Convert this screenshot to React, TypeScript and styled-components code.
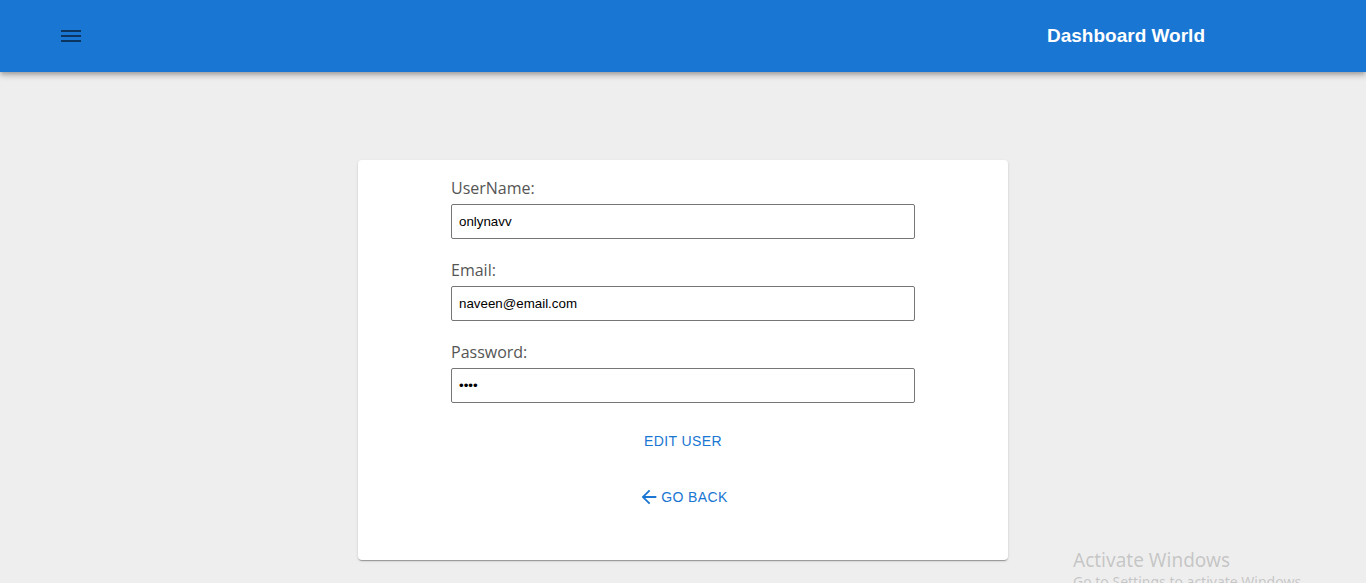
import styled, { createGlobalStyle } from "styled-components";

const GlobalStyle = createGlobalStyle`
  body {
    margin: 0;
    background-color: #eeeeee;
    font-family: "Liberation Sans", Arial, sans-serif;
    overflow: hidden;
  }
`;

const Page = styled.div`
  min-height: 583px;
  position: relative;
`;

const Header = styled.header`
  height: 72px;
  background-color: #1976d2;
  box-shadow: 0 2px 4px -1px rgba(0, 0, 0, 0.2), 0 4px 5px 0 rgba(0, 0, 0, 0.14),
    0 1px 10px 0 rgba(0, 0, 0, 0.12);
  display: flex;
  align-items: center;
  padding: 0 161px 0 58px;
`;

const MenuButton = styled.button`
  border: none;
  background: transparent;
  padding: 0;
  width: 26px;
  height: 24px;
  display: flex;
  color: rgba(0, 0, 0, 0.55);
  cursor: pointer;
`;

const Title = styled.h1`
  margin: 0 0 0 auto;
  color: white;
  font-size: 19px;
  font-weight: 700;
  font-family: "Liberation Sans", Arial, sans-serif;
`;

const Main = styled.main`
  display: flex;
  justify-content: center;
  padding-top: 88px;
`;

const Card = styled.div`
  width: 650px;
  background: white;
  border-radius: 4px;
  box-shadow: 0 2px 1px -1px rgba(0, 0, 0, 0.2), 0 1px 1px 0 rgba(0, 0, 0, 0.14),
    0 1px 3px 0 rgba(0, 0, 0, 0.12);
  padding: 16px 0 45px;
  display: flex;
  flex-direction: column;
  align-items: center;
`;

const Field = styled.div`
  width: 464px;
  display: flex;
  flex-direction: column;
  margin-bottom: 19px;
`;

const Label = styled.label`
  font-family: "Open Sans", sans-serif;
  font-size: 16px;
  line-height: 24px;
  color: #555555;
  margin-bottom: 4px;
`;

const Input = styled.input`
  box-sizing: border-box;
  height: 35px;
  border: 1px solid #767676;
  border-radius: 2px;
  padding: 0 7px;
  font-family: "Liberation Sans", Arial, sans-serif;
  font-size: 13.33px;
  color: #000;
  outline: none;
`;

const TextButton = styled.button<{ $gap: number }>`
  margin-top: ${(p) => p.$gap}px;
  height: 36px;
  display: flex;
  align-items: center;
  gap: 1px;
  border: none;
  background: transparent;
  padding: 6px 8px;
  color: #1976d2;
  font-family: "Liberation Sans", Arial, sans-serif;
  font-size: 14px;
  letter-spacing: 0.4px;
  text-transform: uppercase;
  cursor: pointer;
`;

const Watermark = styled.div`
  position: absolute;
  left: 1073px;
  top: 547px;
  color: rgba(120, 120, 120, 0.35);
  font-family: "Noto Sans", "Open Sans", sans-serif;
  pointer-events: none;
`;

const WatermarkTitle = styled.div`
  font-size: 19px;
  line-height: 26px;
`;

const WatermarkSub = styled.div`
  font-size: 14px;
  line-height: 18px;
`;

const fields = [
  { label: "UserName:", value: "onlynavv", type: "text" },
  { label: "Email:", value: "naveen@email.com", type: "text" },
  { label: "Password:", value: "1234", type: "password" },
];

export default function App() {
  return (
    <Page>
      <GlobalStyle />
      <Header>
        <MenuButton aria-label="menu">
          <svg width="26" height="24" viewBox="0 0 26 24" fill="currentColor">
            <path d="M3 18h20v-2H3v2zm0-5h20v-2H3v2zm0-7v2h20V6H3z" />
          </svg>
        </MenuButton>
        <Title>Dashboard World</Title>
      </Header>
      <Main>
        <Card>
          {fields.map((f) => (
            <Field key={f.label}>
              <Label>{f.label}</Label>
              <Input type={f.type} defaultValue={f.value} readOnly />
            </Field>
          ))}
          <TextButton $gap={1}>Edit User</TextButton>
          <TextButton $gap={20}>
            <svg width="22" height="22" viewBox="0 0 24 24" fill="currentColor">
              <path d="M20 11H7.83l5.59-5.59L12 4l-8 8 8 8 1.41-1.41L7.83 13H20v-2z" />
            </svg>
            Go Back
          </TextButton>
        </Card>
      </Main>
      <Watermark>
        <WatermarkTitle>Activate Windows</WatermarkTitle>
        <WatermarkSub>Go to Settings to activate Windows.</WatermarkSub>
      </Watermark>
    </Page>
  );
}
